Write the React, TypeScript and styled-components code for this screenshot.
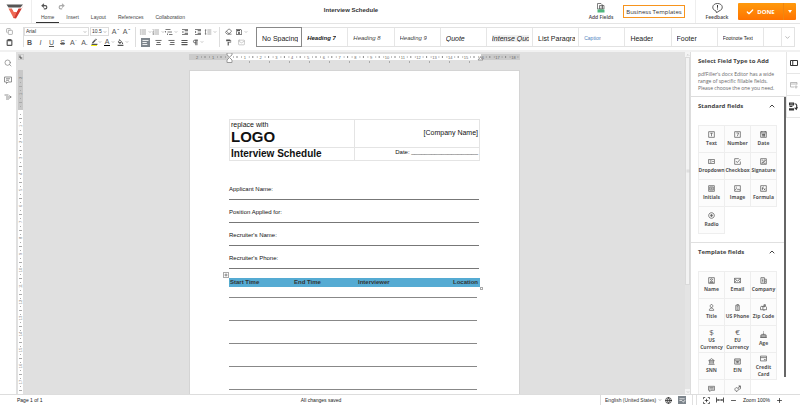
import React from 'react';
import styled, { createGlobalStyle } from 'styled-components';
import {
  Search, Undo2, Redo2, Copy, Clipboard, AlignLeft, AlignCenter, AlignRight, AlignJustify,
  Pilcrow, Eraser, Mail, ChevronDown, ChevronUp, Globe, Check, Minus, Plus,
} from 'lucide-react';
import {
  MdFormatPaint, MdFormatColorFill, MdFormatIndentIncrease, MdFormatIndentDecrease,
  MdFormatLineSpacing, MdFormatListBulleted, MdFormatListNumbered, MdOutlineSave, MdBorderColor,
} from 'react-icons/md';

const GlobalStyle = createGlobalStyle`
  * { box-sizing: border-box; }
  body { margin: 0; background: #fff; color: #444; font-family: "Liberation Sans", Arial, sans-serif; font-size: 5px; }
  button { border: 0; padding: 0; background: none; color: inherit; font: inherit; display: flex; align-items: center; justify-content: center; }
  svg { display: block; flex: none; }
  h1, h2, p { margin: 0; }
`;

const Shell = styled.div`
  height: 100vh;
  display: grid;
  grid-template-rows: 24px 28px minmax(0, 1fr) 11px;
  grid-template-columns: minmax(0, 1fr);
  overflow: hidden;
`;

/* ---------- header ---------- */
const Header = styled.header`
  display: grid;
  grid-template-columns: 32px minmax(0, 1fr) auto minmax(0, 1fr) 130px;
  border-bottom: 1px solid #e4e4e4;
`;
const LogoCell = styled.a`
  display: flex;
  align-items: center;
  padding-left: 6px;
  border-right: 1px solid #eee;
`;
const HeaderLeft = styled.div`
  display: flex;
  flex-direction: column;
  justify-content: space-between;
`;
const History = styled.div`
  display: flex;
  gap: 6px;
  padding: 2px 0 0 7px;
`;
const Tabs = styled.nav`
  display: flex;
  padding-left: 4px;
`;
const Tab = styled.button<{ $active?: boolean }>`
  height: 11px;
  padding: 0 5px 1px;
  margin-right: 2px;
  border-bottom: 1px solid ${(p) => (p.$active ? '#333' : 'transparent')};
  white-space: nowrap;
`;
const DocTitle = styled.h1`
  align-self: start;
  padding-top: 6px;
  font-size: 6px;
  line-height: 8px;
  color: #333;
`;
const HeaderRight = styled.div`
  grid-column: 4 / 6;
  display: flex;
  justify-content: flex-end;
  align-items: stretch;
  padding-right: 4px;
  font-family: "Open Sans", sans-serif;
`;
const StackButton = styled.button<{ $divided?: boolean }>`
  flex-direction: column;
  gap: 1px;
  line-height: 7px;
  font-weight: 600;
  width: ${(p) => (p.$divided ? 43 : 44)}px;
  ${(p) => p.$divided && 'border-left: 1px solid #eee;'}
`;
const TemplatesButton = styled.button`
  align-self: center;
  width: 62px;
  height: 13px;
  margin-right: 10px;
  border: 1px solid #f7941d;
  font-size: 6px;
  font-weight: 500;
  color: #333;
  white-space: nowrap;
`;
const DoneGroup = styled.div`
  align-self: center;
  display: flex;
  height: 17px;
  border-radius: 1px;
  overflow: hidden;
  background: linear-gradient(#ff9a0c, #ff7300);
  color: #fff;
`;
const DoneButton = styled.button`
  width: 45px;
  gap: 3px;
  font-size: 6px;
  font-weight: 700;
`;
const DoneMore = styled.button`
  width: 13px;
  border-left: 1px solid #f0860f;
`;

/* ---------- ribbon ---------- */
const Ribbon = styled.div`
  display: flex;
  padding: 3px 5px 0 0;
  border-bottom: 2px solid #f1f1f1;
`;
const Group = styled.div<{ $width: number; $pad?: number; $line?: boolean }>`
  flex: none;
  width: ${(p) => p.$width}px;
  height: 20px;
  padding-left: ${(p) => p.$pad ?? 2}px;
  display: flex;
  flex-direction: column;
  gap: 1px;
  ${(p) => p.$line && 'border-right: 1px solid #ddd;'}
`;
const Tools = styled.div`
  height: 10px;
  display: flex;
  align-items: center;
`;
const Tool = styled.button<{ $on?: boolean; $wide?: boolean; $pale?: boolean }>`
  width: ${(p) => (p.$wide ? 13 : 11)}px;
  height: 9px;
  gap: 1px;
  font-size: 7px;
  line-height: 9px;
  color: ${(p) => (p.$on ? '#fff' : p.$pale ? '#aaa' : '#555')};
`;
const OnPlate = styled.span`
  display: flex;
  padding: 1px;
  background: #7d858c;
  color: #fff;
`;
const Picker = styled.label<{ $width: number }>`
  position: relative;
  width: ${(p) => p.$width}px;
  height: 9px;
  margin-right: 1px;
  display: flex;
  border: 1px solid #ddd;
  svg { position: absolute; right: 1px; top: 2px; pointer-events: none; }
`;
const Select = styled.select`
  width: 100%;
  appearance: none;
  border: 0;
  padding: 0 0 0 1px;
  background: none;
  font: inherit;
  line-height: 7px;
  color: #333;
`;
const Swatch = styled.span<{ $color: string }>`
  display: flex;
  justify-content: center;
  width: 6px;
  height: 8px;
  line-height: 7px;
  border-bottom: 1px solid ${(p) => p.$color};
`;
const Gallery = styled.div`
  flex: 1;
  min-width: 0;
  height: 20px;
  margin-left: 7px;
  display: flex;
  border: 1px solid #e2e2e2;
`;
const StyleCell = styled.button<{ $on?: boolean; $size: number; $bold?: boolean; $italic?: boolean; $color?: string; $shade?: boolean }>`
  flex: 46 1 46px;
  min-width: 0;
  justify-content: flex-start;
  padding: 2px 3px 0 5px;
  margin: ${(p) => (p.$on ? '-1px 0 -1px -1px' : '0')};
  border: 0 solid #e6e6e6;
  border-right-width: 1px;
  ${(p) => p.$on && 'border: 1px solid #888;'}
  font-size: ${(p) => p.$size}px;
  font-weight: ${(p) => (p.$bold ? 700 : 400)};
  font-style: ${(p) => (p.$italic ? 'italic' : 'normal')};
  color: ${(p) => p.$color ?? '#222'};
  span {
    overflow: hidden;
    white-space: nowrap;
    ${(p) => p.$shade && 'background: #f0f0f0;'}
  }
`;
const GalleryGap = styled.div`
  flex: 18 1 18px;
  border-right: 1px solid #e6e6e6;
`;
const GalleryMore = styled.button`
  flex: 12 1 12px;
  color: #888;
`;

/* ---------- body ---------- */
const Body = styled.div`
  display: grid;
  grid-template-columns: 16px minmax(0, 1fr) 6px 95px 14px;
  grid-template-rows: minmax(0, 1fr);
`;
const Rail = styled.nav`
  display: flex;
  flex-direction: column;
  align-items: center;
  gap: 9px;
  padding-top: 7px;
  color: #777;
`;
const Canvas = styled.main`
  min-width: 0;
  overflow: hidden;
  background: #e0e0e0;
  display: grid;
  grid-template-columns: 8px minmax(0, 1fr);
  grid-template-rows: 18px minmax(0, 1fr);
`;
const Corner = styled.button`
  width: 6px;
  height: 6px;
  margin: 2px 0 0 2px;
  border: 1px solid #ccc;
`;
const RulerRow = styled.div`
  display: flex;
  justify-content: center;
  padding-top: 1px;
`;
const VRuler = styled.div`
  overflow: hidden;
  padding-left: 2px;
`;
const PageWrap = styled.div`
  display: flex;
  justify-content: center;
  overflow: hidden;
`;
const Sheet = styled.article`
  width: 331px;
  height: 467px;
  padding: 48px 39px 0;
  background: #fff;
  border: 1px solid #d4d4d4;
  color: #111;
`;
const TitleTable = styled.table`
  width: 100%;
  border-collapse: collapse;
  td { padding: 0 1px; border: 1px solid #e4e4e4; width: 50%; }
  td + td { text-align: right; }
`;
const Small = styled.div`
  font-size: 7px;
  line-height: 9px;
`;
const CompanyName = styled(Small)`
  padding-bottom: 3px;
`;
const LogoText = styled.div`
  font-size: 15px;
  line-height: 16px;
  padding-bottom: 2px;
  font-weight: 700;
`;
const SheetTitle = styled.h2`
  font-size: 10px;
  line-height: 12px;
`;
const DateLine = styled.div`
  font-size: 6px;
  line-height: 8px;
  padding-bottom: 4px;
`;
const Question = styled.p`
  height: 23px;
  margin: 0 1px 0 0;
  padding-top: 8px;
  border-bottom: 1px solid #777;
  font-size: 6px;
  line-height: 8px;
`;
const Questions = styled.section`
  padding-top: 16px;
`;
const Schedule = styled.div`
  position: relative;
  margin-top: 9px;
`;
const ScheduleTable = styled.table`
  width: 100%;
  table-layout: fixed;
  border-collapse: collapse;
  th {
    height: 9px;
    padding: 0 2px 0 1px;
    background: #55abd3;
    color: #333;
    font-size: 6px;
    line-height: 9px;
    text-align: left;
  }
  th:nth-child(1), th:nth-child(2) { width: 64px; }
  th:last-child { text-align: right; }
  td { height: 23px; padding: 0 3px 0 0; vertical-align: bottom; }
  tbody tr:first-child td { height: 11px; }
`;
const WriteLine = styled.div`
  border-bottom: 1px solid #888;
`;
const MoveHandle = styled.span`
  position: absolute;
  left: -6px;
  top: -6px;
  display: flex;
  border: 1px solid #aaa;
  background: #fff;
  color: #555;
`;
const SizeHandle = styled.span`
  position: absolute;
  right: -3px;
  top: 9px;
  width: 3px;
  height: 3px;
  border: 1px solid #aaa;
  background: #fff;
`;
const ScrollTrack = styled.div`
  display: flex;
  flex-direction: column;
  background: #e4e4e4;
  border-right: 1px solid #ddd;
`;
const ScrollButton = styled.button`
  height: 5px;
  background: #f4f4f4;
  color: #888;
`;
const ScrollThumb = styled.div`
  flex: 227;
  display: flex;
  align-items: center;
  justify-content: center;
  background: #f3f3f3;
  border: 1px solid #dadada;
  color: #bbb;
`;
const ScrollRest = styled.div`
  flex: 105;
`;

/* ---------- field panel ---------- */
const Panel = styled.aside`
  display: flex;
  flex-direction: column;
  min-height: 0;
  font-family: "Open Sans", sans-serif;
`;
const PanelIntro = styled.div`
  padding: 5px 0 4px 7px;
  border-bottom: 1px solid #ddd;
  white-space: nowrap;
`;
const PanelTitle = styled.h2`
  font-size: 6px;
  line-height: 9px;
  font-weight: 700;
  color: #444;
`;
const PanelText = styled.p`
  padding-top: 5px;
  font-size: 5px;
  line-height: 7px;
  color: #666;
`;
const PanelScroll = styled.div`
  flex: 1;
  min-height: 0;
  display: flex;
  overflow: hidden;
`;
const Sections = styled.div`
  flex: 1;
`;
const Bar = styled.div`
  width: 3px;
  height: 280px;
  background: #666;
`;
const Section = styled.section`
  padding: 0 7px 8px;
  border-bottom: 1px solid #e0e0e0;
`;
const SectionHead = styled.button`
  width: 100%;
  height: 18px;
  padding-right: 1px;
  justify-content: space-between;
  font-size: 6px;
  font-weight: 700;
  color: #444;
`;
const FieldGrid = styled.div`
  display: grid;
  grid-template-columns: repeat(3, 26px);
  grid-auto-rows: 27px;
  margin-top: 10px;
  border: 0 solid #eee;
  border-width: 1px 0 0 1px;
`;
const Field = styled.button`
  flex-direction: column;
  gap: 2px;
  background: #fcfcfc;
  border: 0 solid #eee;
  border-width: 0 1px 1px 0;
  font-size: 5px;
  line-height: 7px;
  font-weight: 700;
  color: #555;
`;
const FieldLabel = styled.span`
  min-height: 7px;
`;
const SideTabs = styled.nav`
  display: flex;
  flex-direction: column;
`;
const SideTab = styled.button<{ $pale?: boolean }>`
  height: 22px;
  border: 0 solid #e6e6e6;
  border-width: 0 0 1px 1px;
  color: ${(p) => (p.$pale ? '#aaa' : '#333')};
`;

/* ---------- status bar ---------- */
const Status = styled.footer`
  display: grid;
  grid-template-columns: minmax(0, 1fr) auto minmax(0, 1fr) 158px;
  align-items: center;
  border-top: 1px solid #ddd;
  line-height: 8px;
  color: #222;
`;
const PageCount = styled.span`
  padding-left: 17px;
`;
const StatusRight = styled.div`
  grid-column: 3 / 5;
  display: flex;
  align-items: center;
  justify-content: flex-end;
  height: 10px;
  gap: 6px;
  padding-right: 17px;
`;
const LanguageGroup = styled.div`
  display: flex;
  align-items: center;
  gap: 3px;
  height: 10px;
  padding-left: 3px;
  border-left: 1px solid #ddd;
`;
const Language = styled.label`
  display: flex;
  align-items: center;
  select { width: 54px; }
`;
const SpellButton = styled.button`
  width: 8px;
  height: 8px;
  background: #7d858c;
  color: #fff;
`;
const Divider = styled.span`
  width: 5px;
  height: 10px;
  border: 0 solid #e0e0e0;
  border-width: 0 1px;
`;

const Caret = () => <ChevronDown size={4} strokeWidth={2} />;

/* Outline glyph on a 16-unit box */
const Glyph = ({ d, size = 7, w = 1.6 }: { d: string; size?: number; w?: number }) => (
  <svg width={size} height={size} viewBox="0 0 16 16" fill="none" stroke="currentColor" strokeWidth={w} aria-hidden="true">
    <path d={d} />
  </svg>
);

const BOX = 'M1.5 1.5H14.5V14.5H1.5Z';
const G = {
  text: `${BOX}M5 5H11M8 5V12`,
  number: `${BOX}M5.5 4.5H10.5L7.5 12`,
  date: `${BOX}M1.5 4.5H14.5M4 0V3M12 0V3M4 8H12M4 11H12M7 6V13M10 6V13`,
  dropdown: 'M1 3.5H15V12.5H1ZM4 6.5H8M4 9.5H8M10 7L11.5 9L13 7',
  checkbox: 'M14.5 8V14.5H1.5V1.5H11M4.5 7L7.5 10.5L14.5 2.5',
  signature: `${BOX}M4 12L11 4L12.5 5.5L6 12ZM8 12H13M4 5H7`,
  initials: `${BOX}M4 4.5H12V11.5H4ZM6 7H10M6 9H10`,
  image: `${BOX}M2 12L6 8L9 11L11 9.5L14 12M4.5 5H6.5`,
  formula: `${BOX}M8 4C5.5 3.5 6.5 8 5 12M4 7.5H8M9 8L12 12M12 8L9 12`,
  radio: 'M8 1.5A6.5 6.5 0 1 0 8.01 1.5M8 5.5A2.5 2.5 0 1 0 8.01 5.5M8 6V10M6 8H10',
  name: `${BOX}M8 4A2 2 0 1 0 8.01 4M4 12.5C5 8.5 11 8.5 12 12.5Z`,
  email: 'M1 3H15V13H1ZM1 3.5L8 9L15 3.5M1 12.5L5.5 8M15 12.5L10.5 8',
  company: 'M2 1.5H10V14.5H2ZM10 5H14.5V14.5H10M4.5 5H7.5M4.5 8H7.5M4.5 11H7.5M12 8V12',
  title: 'M8 1A3 3.5 0 1 0 8.01 1M3 14.5C3 7.5 13 7.5 13 14.5Z',
  phone: 'M4 3H12V15H4ZM6 1H10V3M6 6H10M6 9H10M6 12H10',
  zip: 'M1 13V8C1 4.5 6.5 4.5 6.5 8V13ZM4 5.5H12C14.5 5.5 15 7 15 9V13H6.5M9 8V1.5H12.5V4H9M9 13V16',
  age: 'M2 14.5V9H14V14.5ZM0 14.5H16M8 9V5M8 1V3.5M2 11.5H14M5 9V6.5M11 9V6.5',
  bank: 'M1.5 6L8 1.5L14.5 6ZM3.5 7V13M6.5 7V13M9.5 7V13M12.5 7V13M1 14.5H15',
  ein: 'M1.5 2H14.5V14H1.5ZM1.5 5H14.5M4 8H12M4 11H12M8 8V11',
  card: 'M1 2.5H15V13.5H1ZM1 6H15M9 10.5H13',
  note: 'M1 3H15V12H7L4 15V12H1ZM3 6H13M3 9H13',
  gender: 'M6 6A4 4 0 1 0 6.01 6M9 7.5L14.5 2M10.5 2H14.5V6M6 14V16M11 9A3 3 0 1 0 11 4',
};

type FieldDef = { label: string; icon: string; iconOnly?: boolean };

const standardFields: FieldDef[] = [
  { label: 'Text', icon: G.text }, { label: 'Number', icon: G.number }, { label: 'Date', icon: G.date },
  { label: 'Dropdown', icon: G.dropdown }, { label: 'Checkbox', icon: G.checkbox }, { label: 'Signature', icon: G.signature },
  { label: 'Initials', icon: G.initials }, { label: 'Image', icon: G.image }, { label: 'Formula', icon: G.formula },
  { label: 'Radio', icon: G.radio },
];
const templateFields: FieldDef[] = [
  { label: 'Name', icon: G.name }, { label: 'Email', icon: G.email }, { label: 'Company', icon: G.company },
  { label: 'Title', icon: G.title }, { label: 'US Phone', icon: G.phone }, { label: 'Zip Code', icon: G.zip },
  { label: 'US Currency', icon: '$' }, { label: 'EU Currency', icon: '€' }, { label: 'Age', icon: G.age },
  { label: 'SNN', icon: G.bank }, { label: 'EIN', icon: G.ein }, { label: 'Credit Card', icon: G.card },
  { label: 'Note', icon: G.note, iconOnly: true }, { label: 'Gender', icon: G.gender, iconOnly: true },
];

const CurrencySign = styled.span`
  font-size: 8px;
  line-height: 7px;
  font-weight: 400;
`;

const styleCells = [
  { label: 'No Spacing', size: 7, on: true },
  { label: 'Heading 7', size: 6, bold: true, italic: true },
  { label: 'Heading 8', size: 6, italic: true, color: '#444' },
  { label: 'Heading 9', size: 6, italic: true, color: '#444' },
  { label: 'Quote', size: 7, italic: true },
  { label: 'Intense Quote', size: 7, italic: true, shade: true },
  { label: 'List Paragraph', size: 7 },
  { label: 'Caption', size: 5, color: '#4f81bd' },
  { label: 'Header', size: 7 },
  { label: 'Footer', size: 7 },
  { label: 'Footnote Text', size: 5 },
];

const UNIT = 16;

const HorizontalRuler = () => (
  <svg width="331" height="10" viewBox="0 0 331 10" aria-hidden="true">
    <rect x="0" y="1" width="331" height="6" fill="#cbcbcb" />
    <rect x="40" y="1" width="252" height="6" fill="#fff" />
    {Array.from({ length: 21 }, (_, i) => i - 2).map((n) => {
      const x = 40 + n * UNIT - (n > 0 ? n * 0.2 : 0);
      return (
        <g key={n}>
          {n !== 0 && (
            <text x={x} y="6" fontSize="4" textAnchor="middle" fill="#666">{Math.abs(n)}</text>
          )}
          <path d={`M${x + 4} 4H${x + 5}M${x + 8} 3V5M${x + 12} 4H${x + 13}`} stroke="#888" strokeWidth="1" />
        </g>
      );
    })}
    {Array.from({ length: 12 }, (_, i) => (
      <path key={i} d={`M${60 + i * 20}.5 8V10`} stroke="#aaa" />
    ))}
    <path d="M38 0H43V2L40.5 4L38 2ZM38 7L40.5 4.5L43 7V9.5H38Z" fill="#fff" stroke="#999" />
    <path d="M289 7L291.5 4L294 7Z" fill="#fff" stroke="#999" />
  </svg>
);

const VerticalRuler = () => (
  <svg width="5" height="360" viewBox="0 0 5 360" aria-hidden="true">
    <rect width="5" height="40" fill="#c8c8c8" />
    <rect y="40" width="5" height="320" fill="#fff" />
    {Array.from({ length: 22 }, (_, i) => i - 2).map((n) => {
      const y = 40 + n * UNIT;
      return (
        <g key={n}>
          {n !== 0 && (
            <text transform={`translate(4 ${y}) rotate(-90)`} fontSize="4" textAnchor="middle" fill="#777">{Math.abs(n)}</text>
          )}
          <path d={`M2 ${y + 4.5}H3M1 ${y + 8.5}H4M2 ${y + 12.5}H3`} stroke="#aaa" />
        </g>
      );
    })}
  </svg>
);

const FieldSection = ({ title, fields }: { title: string; fields: FieldDef[] }) => (
  <Section>
    <SectionHead>{title}<ChevronUp size={8} strokeWidth={3} /></SectionHead>
    <FieldGrid>
      {fields.map(({ label, icon, iconOnly }) => (
        <Field key={label} aria-label={label}>
          {icon.length === 1 ? <CurrencySign>{icon}</CurrencySign> : <Glyph d={icon} />}
          <FieldLabel>{iconOnly ? null : label}</FieldLabel>
        </Field>
      ))}
    </FieldGrid>
  </Section>
);

export default function App() {
  return (
    <Shell>
      <GlobalStyle />
      <Header>
        <LogoCell href="#" aria-label="pdfFiller">
          <svg width="18" height="15" viewBox="0 0 36 30">
            <path d="M1 1H34L29 7H5Z" fill="#555" />
            <path d="M35 3L20 29L14 28L25 9H31Z" fill="#d23a30" />
            <path d="M5 9H12L16 16H21L17 27L14 26Z" fill="#ef6a55" />
            <path d="M12 9H25L21 16H16Z" fill="#fff" />
          </svg>
        </LogoCell>
        <HeaderLeft>
          <History>
            <Tool aria-label="Undo"><Undo2 size={7} strokeWidth={4} /></Tool>
            <Tool $pale aria-label="Redo"><Redo2 size={7} strokeWidth={4} /></Tool>
          </History>
          <Tabs>
            <Tab $active>Home</Tab>
            <Tab>Insert</Tab>
            <Tab>Layout</Tab>
            <Tab>References</Tab>
            <Tab>Collaboration</Tab>
          </Tabs>
        </HeaderLeft>
        <DocTitle>Interview Schedule</DocTitle>
        <HeaderRight>
          <StackButton>
            <svg width="8" height="10" viewBox="0 0 16 20" fill="none" stroke="#555" strokeWidth="1.5">
              <path d="M1 1H8L11 4V12H1ZM5 5H14V12H5ZM7 8H12" />
              <path d="M1 13H15V19H1Z" fill="#4fb67d" stroke="none" />
            </svg>
            Add Fields
          </StackButton>
          <TemplatesButton>Business Templates</TemplatesButton>
          <StackButton $divided>
            <svg width="11" height="10" viewBox="0 0 22 20" fill="none" stroke="#333" strokeWidth="1.6">
              <path d="M8 16C-2 13 0 1 11 1S24 13 14 16L9 19.5Z" />
              <path d="M11 4V9.5M11 11V13" strokeWidth="2" />
            </svg>
            Feedback
          </StackButton>
          <DoneGroup>
            <DoneButton><Check size={8} strokeWidth={4} />DONE</DoneButton>
            <DoneMore aria-label="More done options">
              <svg width="4" height="3" viewBox="0 0 8 6"><path d="M0 0H8L4 6Z" fill="#fff" /></svg>
            </DoneMore>
          </DoneGroup>
        </HeaderRight>
      </Header>

      <Ribbon>
        <Group $width={24} $pad={4} $line>
          <Tools><Tool $pale aria-label="Copy"><Copy size={7} strokeWidth={3} /></Tool></Tools>
          <Tools><Tool aria-label="Paste"><Clipboard size={7} strokeWidth={4} /></Tool></Tools>
        </Group>
        <Group $width={112} $pad={0} $line>
          <Tools>
            <Picker $width={65}>
              <Select aria-label="Font"><option>Arial</option></Select><Caret />
            </Picker>
            <Picker $width={19}>
              <Select aria-label="Font size"><option>10.5</option></Select><Caret />
            </Picker>
            <Tool aria-label="Grow font">A<sup>ˆ</sup></Tool>
            <Tool aria-label="Shrink font">A<sup>ˇ</sup></Tool>
          </Tools>
          <Tools>
            <Tool aria-label="Bold"><b>B</b></Tool>
            <Tool aria-label="Italic"><i>I</i></Tool>
            <Tool aria-label="Underline"><u>U</u></Tool>
            <Tool aria-label="Strikethrough"><s>S</s></Tool>
            <Tool aria-label="Superscript">Aˈ</Tool>
            <Tool aria-label="Subscript">A.</Tool>
            <Tool $wide aria-label="Highlight"><Swatch $color="#f5ee1b"><MdBorderColor size={7} /></Swatch><Caret /></Tool>
            <Tool $wide aria-label="Font colour"><Swatch $color="#000">A</Swatch><Caret /></Tool>
            <Tool $wide aria-label="Shading"><MdFormatColorFill size={7} /><Caret /></Tool>
          </Tools>
        </Group>
        <Group $width={84} $pad={3} $line>
          <Tools>
            <Tool $wide aria-label="Bullets"><MdFormatListBulleted size={8} /><Caret /></Tool>
            <Tool $wide aria-label="Numbering"><MdFormatListNumbered size={8} /><Caret /></Tool>
            <Tool $wide aria-label="Multilevel list"><Glyph d="M1 3H11M5 8H14M8 13H15M1 6V9M5 11V14" size={8} /><Caret /></Tool>
            <Tool $wide aria-label="Decrease indent"><MdFormatIndentDecrease size={8} /></Tool>
            <Tool $wide aria-label="Increase indent"><MdFormatIndentIncrease size={8} /></Tool>
            <Tool $wide aria-label="Line spacing"><MdFormatLineSpacing size={8} /><Caret /></Tool>
          </Tools>
          <Tools>
            <Tool $wide $on aria-label="Align left"><OnPlate><AlignLeft size={7} strokeWidth={3} /></OnPlate></Tool>
            <Tool $wide aria-label="Align centre"><AlignCenter size={7} strokeWidth={3} /></Tool>
            <Tool $wide aria-label="Align right"><AlignRight size={7} strokeWidth={3} /></Tool>
            <Tool $wide aria-label="Justify"><AlignJustify size={7} strokeWidth={4} /></Tool>
            <Tool $wide aria-label="Paragraph marks"><Pilcrow size={7} strokeWidth={3} /><Caret /></Tool>
          </Tools>
        </Group>
        <Group $width={29} $pad={2}>
          <Tools>
            <Tool $wide aria-label="Clear style"><Eraser size={7} strokeWidth={2.5} /></Tool>
            <Tool $wide aria-label="Save style"><MdOutlineSave size={8} /><Caret /></Tool>
          </Tools>
          <Tools>
            <Tool $wide aria-label="Copy style"><MdFormatPaint size={7} /></Tool>
            <Tool $wide $pale aria-label="Mail merge"><Mail size={7} /></Tool>
          </Tools>
        </Group>
        <Gallery>
          {styleCells.map((s) => (
            <StyleCell key={s.label} $on={s.on} $size={s.size} $bold={s.bold} $italic={s.italic} $color={s.color} $shade={s.shade}>
              <span>{s.label}</span>
            </StyleCell>
          ))}
          <GalleryGap />
          <GalleryMore aria-label="More styles"><ChevronDown size={7} /></GalleryMore>
        </Gallery>
      </Ribbon>

      <Body>
        <Rail>
          <button aria-label="Search"><Search size={8} strokeWidth={2} /></button>
          <button aria-label="Comments"><Glyph d="M1 2H15V12H8L5 15V12H1ZM4 5.5H12M4 8.5H10" size={8} /></button>
          <button aria-label="Navigation"><Glyph d="M1 4H9M4 8H15M4 12H10M11 5L14 8L11 11" size={8} /></button>
        </Rail>
        <Canvas>
          <Corner aria-label="Tab stop"><Glyph d="M4 2V12H13" size={4} w={4} /></Corner>
          <RulerRow><HorizontalRuler /></RulerRow>
          <VRuler><VerticalRuler /></VRuler>
          <PageWrap>
            <Sheet>
              <TitleTable>
                <tbody>
                  <tr>
                    <td><Small>replace with</Small><LogoText>LOGO</LogoText></td>
                    <td><CompanyName>[Company Name]</CompanyName></td>
                  </tr>
                  <tr>
                    <td><SheetTitle>Interview Schedule</SheetTitle></td>
                    <td><DateLine>Date: ____________________</DateLine></td>
                  </tr>
                </tbody>
              </TitleTable>
              <Questions>
                <Question>Applicant Name:</Question>
                <Question>Position Applied for:</Question>
                <Question>Recruiter's Name:</Question>
                <Question>Recruiter's Phone:</Question>
              </Questions>
              <Schedule>
                <ScheduleTable>
                  <thead>
                    <tr><th>Start Time</th><th>End Time</th><th>Interviewer</th><th>Location</th></tr>
                  </thead>
                  <tbody>
                    {[0, 1, 2, 3, 4].map((r) => (
                      <tr key={r}><td colSpan={4}><WriteLine /></td></tr>
                    ))}
                  </tbody>
                </ScheduleTable>
                <MoveHandle><Plus size={4} strokeWidth={4} /></MoveHandle>
                <SizeHandle />
              </Schedule>
            </Sheet>
          </PageWrap>
        </Canvas>
        <ScrollTrack>
          <ScrollButton aria-label="Scroll up"><ChevronUp size={4} /></ScrollButton>
          <ScrollThumb><Glyph d="M2 4H14M2 8H14M2 12H14" size={4} /></ScrollThumb>
          <ScrollRest />
          <ScrollButton aria-label="Scroll down"><ChevronDown size={4} /></ScrollButton>
        </ScrollTrack>
        <Panel>
          <PanelIntro>
            <PanelTitle>Select Field Type to Add</PanelTitle>
            <PanelText>
              pdfFiller's docx Editor has a wide<br />range of specific fillable fields.<br />Please choose the one you need.
            </PanelText>
          </PanelIntro>
          <PanelScroll>
            <Sections>
              <FieldSection title="Standard fields" fields={standardFields} />
              <FieldSection title="Template fields" fields={templateFields} />
            </Sections>
            <Bar />
          </PanelScroll>
        </Panel>
        <SideTabs>
          <SideTab aria-label="Panel"><Glyph d="M1 3H15V13H1ZM5.5 3V13" size={8} w={2} /></SideTab>
          <SideTab $pale aria-label="Field settings"><Glyph d="M8 12H1V3H14V7M1 6H14M12 10A2 2 0 1 0 12.01 10" size={8} /></SideTab>
          <SideTab aria-label="Reorder fields"><Glyph d="M1 2H8V5H1ZM1 8H6M1 12H8V14H1ZM10 3C15 3 14 8 13 12M10 10L13 13L15 9" size={9} w={2} /></SideTab>
        </SideTabs>
      </Body>

      <Status>
        <PageCount>Page 1 of 1</PageCount>
        <span>All changes saved</span>
        <StatusRight>
          <LanguageGroup>
            <Language>
              <Select aria-label="Language"><option>English (United States)</option></Select><Caret />
            </Language>
            <button aria-label="Set language"><Globe size={7} strokeWidth={2.5} /></button>
          </LanguageGroup>
          <SpellButton aria-label="Spell check"><Glyph d="M1 4H13M1 8H7M8 9L10 12L14 7" size={7} /></SpellButton>
          <Divider />
          <button aria-label="Fit page"><Glyph d="M1 5V1H5M11 1H15V5M15 11V15H11M5 15H1V11M4 8H12M8 4V12" size={7} /></button>
          <button aria-label="Fit width"><Glyph d="M1 3V13M15 3V13M3 8H13M5 6L3 8L5 10M11 6L13 8L11 10" size={8} /></button>
          <button aria-label="Zoom out"><Minus size={7} strokeWidth={2.5} /></button>
          <span>Zoom 100%</span>
          <button aria-label="Zoom in"><Plus size={7} strokeWidth={2.5} /></button>
        </StatusRight>
      </Status>
    </Shell>
  );
}
